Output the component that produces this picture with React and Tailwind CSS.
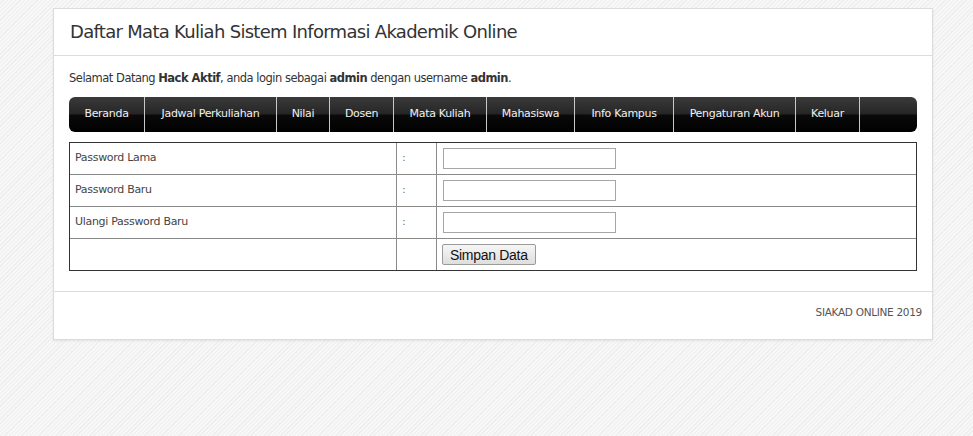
import React from "react";

const menu = [
  ["Beranda", "w-[76px]"],
  ["Jadwal Perkuliahan", "w-[132px]"],
  ["Nilai", "w-[53px]"],
  ["Dosen", "w-[64px]"],
  ["Mata Kuliah", "w-[93px]"],
  ["Mahasiswa", "w-[88px]"],
  ["Info Kampus", "w-[99px]"],
  ["Pengaturan Akun", "w-[122px]"],
  ["Keluar", "w-[64px]"],
];

const rows = ["Password Lama", "Password Baru", "Ulangi Password Baru"];

export default function App() {
  return (
    <div
      className="w-[973px] h-[436px] overflow-hidden bg-[repeating-linear-gradient(135deg,#f7f7f7_0px,#f7f7f7_2px,#eeeeee_2px,#eeeeee_3px)] pt-[8px] text-[#333]"
      style={{ fontFamily: '"DejaVu Sans", Tahoma, sans-serif' }}
    >
      <div className="ml-[53px] w-[880px] bg-white border border-[#dcdcdc] shadow-[0_1px_2px_rgba(0,0,0,0.08)]">
        <div className="h-[47px] flex items-center pl-[16px] border-b border-[#dcdcdc]">
          <h1 className="text-[18px] tracking-[-0.7px] text-[#333] leading-none">
            Daftar Mata Kuliah Sistem Informasi Akademik Online
          </h1>
        </div>
        <div className="px-[15px] pt-[15px] pb-[20px]">
          <p className="text-[11.5px] tracking-[-0.5px] leading-[14px] text-[#333]">
            Selamat Datang <b>Hack Aktif</b>, anda login sebagai <b>admin</b> dengan username <b>admin</b>.
          </p>
          <div className="mt-[12px] h-[35px] rounded-[6px] flex bg-[linear-gradient(to_bottom,#3a3a3a_0%,#262626_48%,#0a0a0a_52%,#000_100%)] overflow-hidden">
            {menu.map(([label, w]) => (
              <div
                key={label}
                className={`${w} shrink-0 h-full flex items-center justify-center border-r border-[#c8c8c8] text-[11px] tracking-[-0.3px] text-[#f0f0f0]`}
              >
                {label}
              </div>
            ))}
          </div>
          <div className="mt-[10px] border border-[#333] text-[11px] tracking-[-0.3px] text-[#444]">
            {rows.map((r, i) => (
              <div key={r} className={`flex ${i > 0 ? "h-[32px] border-t border-[#8a8a8a]" : "h-[31px]"}`}>
                <div className="w-[327px] flex items-center pl-[5px] border-r border-[#8a8a8a]">{r}</div>
                <div className="w-[40px] flex items-center pl-[5px] border-r border-[#8a8a8a] text-[#777]">:</div>
                <div className="flex-1 flex items-center pl-[6px]">
                  <input type="password" className="w-[173px] h-[21px] border border-[#a6a6a6] bg-white outline-none" />
                </div>
              </div>
            ))}
            <div className="flex h-[32px] border-t border-[#8a8a8a]">
              <div className="w-[327px] border-r border-[#8a8a8a]" />
              <div className="w-[40px] border-r border-[#8a8a8a]" />
              <div className="flex-1 flex items-center pl-[5px]">
                <button
                  className="h-[21px] px-[7px] border border-[#9a9a9a] rounded-[2px] bg-[linear-gradient(to_bottom,#f6f6f6,#dedede)] text-[14px] text-[#111] leading-none"
                  style={{ fontFamily: '"Liberation Sans", Arial, sans-serif' }}
                >
                  Simpan Data
                </button>
              </div>
            </div>
          </div>
        </div>
        <div className="h-[48px] border-t border-[#dcdcdc] flex items-start justify-end pr-[10px] pt-[13px]">
          <span className="text-[10.5px] tracking-[-0.3px] leading-[14px] text-[#555]">SIAKAD ONLINE 2019</span>
        </div>
      </div>
    </div>
  );
}
